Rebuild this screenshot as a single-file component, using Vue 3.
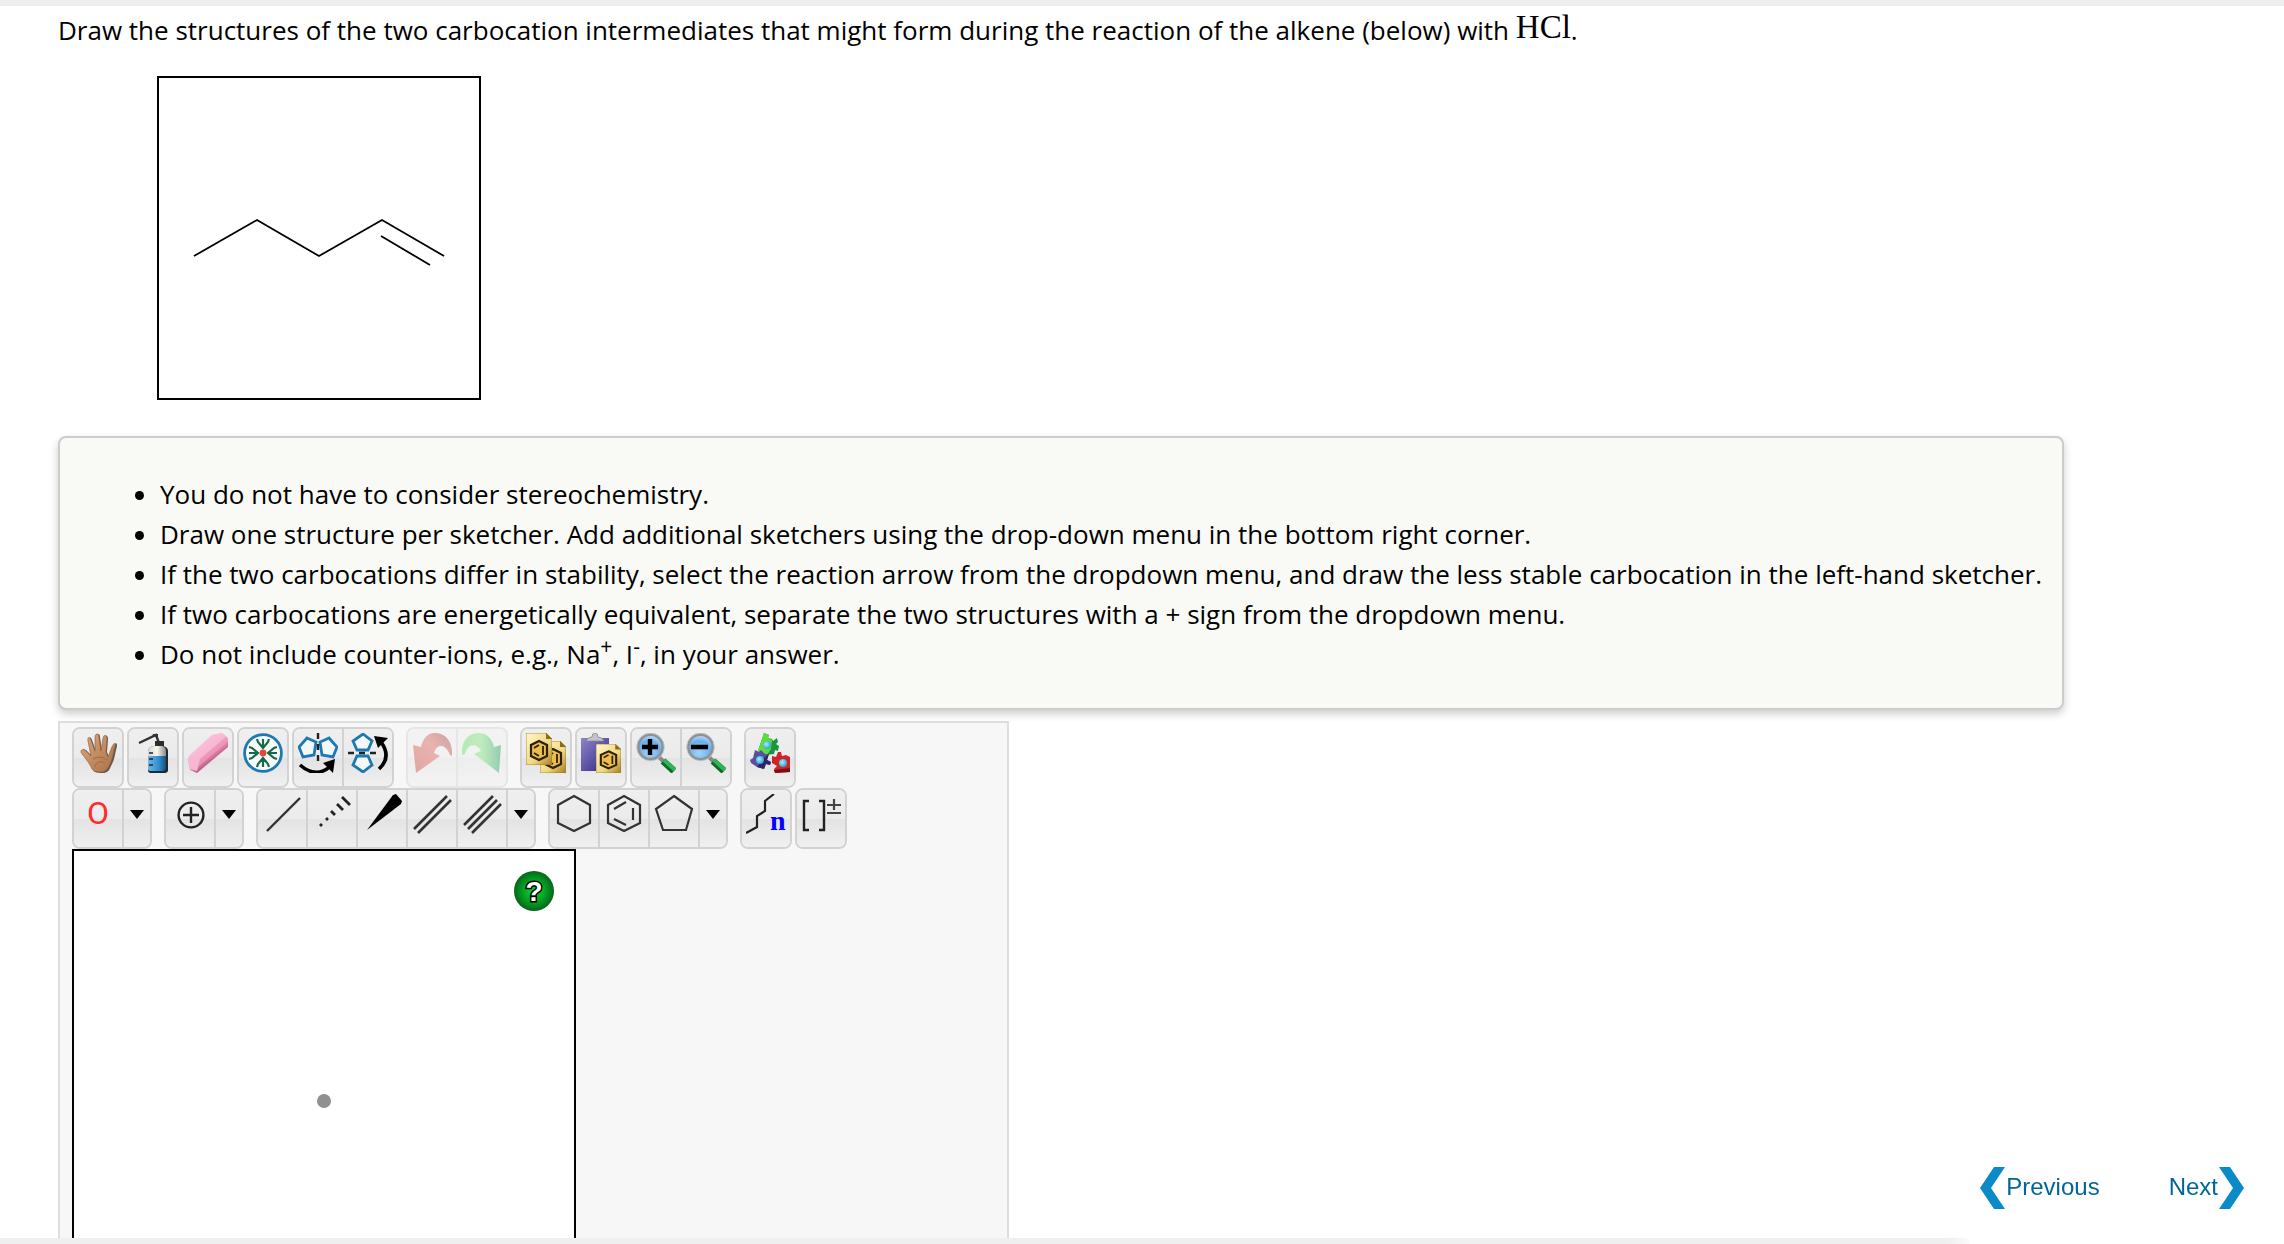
<script setup>
import { ref } from 'vue';

// toolbar definition: each group is one rounded block, 'menu' is the narrow drop-down cell
const topRow = [
  { tools: [{ icon: 'hand', label: 'Drag' }] },
  { tools: [{ icon: 'clear', label: 'Clear' }] },
  { tools: [{ icon: 'erase', label: 'Erase' }] },
  { tools: [{ icon: 'clean', label: 'Clean structure' }] },
  { tools: [{ icon: 'flip-h', label: 'Flip horizontal' }, { icon: 'flip-v', label: 'Flip vertical' }] },
  { spaced: true, disabled: true, tools: [{ icon: 'undo', label: 'Undo' }, { icon: 'redo', label: 'Redo' }] },
  { spaced: true, tools: [{ icon: 'copy', label: 'Copy' }] },
  { tools: [{ icon: 'paste', label: 'Paste' }] },
  { tools: [{ icon: 'zoom-in', label: 'Zoom in' }, { icon: 'zoom-out', label: 'Zoom out' }] },
  { spaced: true, tools: [{ icon: 'addons', label: 'Add-ons' }] },
];

const bottomRow = [
  { tools: [{ text: 'O', label: 'Oxygen' }, { menu: true, label: 'More elements' }] },
  { spaced: true, tools: [{ icon: 'charge', label: 'Charge' }, { menu: true, label: 'More charges' }] },
  {
    spaced: true,
    tools: [
      { icon: 'single', label: 'Single bond' },
      { icon: 'hashed', label: 'Hashed bond' },
      { icon: 'wedge', label: 'Wedge bond' },
      { icon: 'double', label: 'Double bond' },
      { icon: 'triple', label: 'Triple bond' },
      { menu: true, label: 'More bonds' },
    ],
  },
  {
    spaced: true,
    tools: [
      { icon: 'hexagon', label: 'Cyclohexane' },
      { icon: 'benzene', label: 'Benzene' },
      { icon: 'pentagon', label: 'Cyclopentane' },
      { menu: true, label: 'More rings' },
    ],
  },
  { spaced: true, tools: [{ icon: 'chain', label: 'Chain', count: 'n' }] },
  { tools: [{ icon: 'bracket', label: 'Bracket' }] },
];

const rows = [topRow, bottomRow];
const activeTool = ref('');
</script>

<template>
  <div class="frame">
    <!-- shared icon shapes -->
    <svg class="sprites" width="0" height="0" aria-hidden="true">
      <defs>
        <linearGradient id="skin" x1="0" y1="0" x2="1" y2="1">
          <stop offset="0" stop-color="#dda97c" /><stop offset="1" stop-color="#a86f45" />
        </linearGradient>
        <linearGradient id="water">
          <stop offset="0" stop-color="#6fb7e8" /><stop offset="0.6" stop-color="#2f8fd0" /><stop offset="1" stop-color="#174e78" />
        </linearGradient>
        <linearGradient id="glass">
          <stop offset="0" stop-color="#d8d8d4" /><stop offset="0.5" stop-color="#faf6ee" /><stop offset="1" stop-color="#8a8a8a" />
        </linearGradient>
        <linearGradient id="pink" x1="0.3" y1="0.2" x2="0.75" y2="0.8">
          <stop offset="0" stop-color="#fbc3da" /><stop offset="0.5" stop-color="#f29cc0" /><stop offset="0.75" stop-color="#c0638c" /><stop offset="1" stop-color="#4a1c2e" />
        </linearGradient>
        <linearGradient id="red-arrow" x1="0" y1="1" x2="1" y2="0">
          <stop offset="0" stop-color="#c9443c" /><stop offset="0.6" stop-color="#d9625a" /><stop offset="1" stop-color="#8c3a36" />
        </linearGradient>
        <linearGradient id="green-arrow">
          <stop offset="0" stop-color="#6ad86a" /><stop offset="0.5" stop-color="#7de07a" /><stop offset="1" stop-color="#1f9a58" />
        </linearGradient>
        <linearGradient id="paper" x1="0" y1="0" x2="1" y2="1">
          <stop offset="0" stop-color="#fff8cf" /><stop offset="0.6" stop-color="#f0d780" /><stop offset="1" stop-color="#a87c1c" />
        </linearGradient>
        <linearGradient id="board" x1="0" y1="0" x2="1" y2="1">
          <stop offset="0" stop-color="#8d84cc" /><stop offset="0.5" stop-color="#5f56a8" /><stop offset="1" stop-color="#2f2870" />
        </linearGradient>
        <radialGradient id="lens" cx="0.45" cy="0.75" r="0.8">
          <stop offset="0" stop-color="#9fd4fb" /><stop offset="0.6" stop-color="#6aaee8" /><stop offset="1" stop-color="#d4eafa" />
        </radialGradient>
        <radialGradient id="bead" cx="0.4" cy="0.4" r="0.6">
          <stop offset="0" stop-color="#a8ecff" /><stop offset="1" stop-color="#2ba6d8" />
        </radialGradient>
        <radialGradient id="help-fill">
          <stop offset="0" stop-color="#00d62c" /><stop offset="0.5" stop-color="#04aa24" /><stop offset="1" stop-color="#05661a" />
        </radialGradient>
      </defs>

      <symbol id="hand" viewBox="0 0 40 40">
        <path d="M14 37C12 31 8 26 4 21C1 17 5 15 8 18L13 23L10 8C9 4 12 3 13 7L17 18L17 4C17 0 21 0 21 4L23 18L25 5C26 1 29 2 29 6L28 19L30 24C32 19 33 15 35 12C38 8 39 12 37 17C36 22 35 28 32 33C30 38 28 40 24 40C20 40 16 40 14 37Z" fill="#3c281c" transform="translate(1 0)" opacity="0.75" />
        <path d="M14 36C12 31 8 26 4 21C1 17 5 15 8 18L13 23L10 8C9 4 12 3 13 7L17 18L17 4C17 0 21 0 21 4L23 18L25 5C26 1 29 2 29 6L28 19L30 24C32 19 33 15 35 12C38 8 38 12 36 17C35 22 34 28 31 33C29 37 27 39 23 39C19 39 16 39 14 36Z" fill="url(#skin)" stroke="#8a5a3a" stroke-width="0.6" />
        <path d="M15 26C20 23 25 24 29 27M17 34C18 29 22 27 27 30" fill="none" stroke="#a06a44" stroke-width="1" />
      </symbol>
      <symbol id="clear" viewBox="0 0 40 40">
        <path d="M6 10L23 2L26 10" fill="none" stroke="#333" stroke-width="2.4" />
        <path d="M20 1H25V4H19Z" fill="#333" />
        <rect x="22" y="8" width="9" height="5" fill="#2c2c2c" />
        <path d="M15 18Q16 13 22 13H30Q35 14 35 18V38Q34 40 32 40H17Q15 39 15 38Z" fill="#1c2a33" />
        <path d="M15 18Q16 13 22 13H29Q33 14 33 18V24H15Z" fill="url(#glass)" />
        <path d="M15 23H33V36Q32 38 30 38H17Q15 38 15 36Z" fill="url(#water)" />
        <path d="M16 20H20M16 26H20M16 32H20" stroke="#222" stroke-width="1.6" />
      </symbol>
      <symbol id="erase" viewBox="0 0 40 40">
        <path d="M1 23L24 2L34 0L40 5V14L9 40L2 37L0 28Z" fill="url(#pink)" />
        <path d="M1 23L24 2L34 0L38 4L12 26L3 25Z" fill="#fabfd8" opacity="0.7" />
        <path d="M12 26L38 4V10L10 34Z" fill="#f094bc" opacity="0.75" />
        <path d="M1 24L12 26L9 38L2 36L0 28Z" fill="#f7b6d2" />
      </symbol>
      <symbol id="clean" viewBox="0 0 40 40">
        <circle cx="20" cy="20" r="18.4" fill="#fbfdfc" stroke="#1d79b4" stroke-width="2.8" />
        <g fill="none" stroke="#146b4a" stroke-width="2.2">
          <path d="M20 6V15M14 6L15 9L20 15L25 9L26 6" />
          <path d="M20 34V25M14 34L15 31L20 25L25 31L26 34" />
          <path d="M6 20H15M6 14L9 15L15 20L9 25L6 26" />
          <path d="M34 20H25M34 14L31 15L25 20L31 25L34 26" />
        </g>
        <circle cx="20" cy="20" r="3.4" fill="#e2483c" />
      </symbol>
      <symbol id="flip-h" viewBox="0 0 40 40">
        <path d="M9 5L18 9L16 22L5 24L1 14ZM31 5L22 9L24 22L35 24L39 14Z" fill="#f3f8fb" stroke="#1d79b4" stroke-width="2.8" />
        <path d="M20 0V6M20 11V17M20 22V28" stroke="#222" stroke-width="2.4" />
        <path d="M2 32Q18 46 33 33" fill="none" stroke="#000" stroke-width="3.6" />
        <path d="M25 30L37 26L35 40Z" />
      </symbol>
      <symbol id="flip-v" viewBox="0 0 40 40">
        <path d="M15 1L24 8L20 17H9L5 8ZM15 39L24 32L20 23H9L5 32Z" fill="#f3f8fb" stroke="#1d79b4" stroke-width="2.8" />
        <path d="M0 20H6M11 20H17M22 20H28" stroke="#222" stroke-width="2.4" />
        <path d="M31 36Q44 24 33 9" fill="none" stroke="#000" stroke-width="3.6" />
        <path d="M26 3L40 5L30 15Z" />
      </symbol>
      <symbol id="undo" viewBox="0 0 40 40">
        <path d="M1 12L4 40L28 23L22 20C25 11 33 10 38 22L40 23C41 8 33 0 23 0C15 0 11 6 9 14Z" fill="url(#red-arrow)" />
      </symbol>
      <symbol id="redo" viewBox="0 0 40 40">
        <path d="M39 12L37 40L12 21L19 18C15 10 6 10 3 21L0 22C-1 8 6 0 17 0C25 0 30 6 32 14Z" fill="url(#green-arrow)" />
      </symbol>
      <symbol id="page" viewBox="0 0 26 32" preserveAspectRatio="none">
        <path d="M0 0H20L26 6V32H0Z" fill="url(#paper)" stroke="#9a7a28" stroke-width="0.8" />
        <path d="M20 0L26 6H20Z" fill="#8a6a20" />
        <path d="M13 8L21 12V23L13 27L5 23V12Z" fill="#eebb4e" stroke="#2a2108" stroke-width="2.2" />
        <path d="M8 15L13 12M8 20L13 23M17 13V22" fill="none" stroke="#2a2108" stroke-width="1.8" />
      </symbol>
      <symbol id="copy" viewBox="0 0 40 40">
        <use href="#page" x="14" y="8" width="26" height="32" />
        <use href="#page" x="0" y="0" width="26" height="32" />
      </symbol>
      <symbol id="paste" viewBox="0 0 40 40">
        <path d="M0 5H28V38H0Z" fill="url(#board)" />
        <path d="M5 8Q7 4 11 4Q11 0 14 0Q17 0 17 4Q21 4 23 8Z" fill="#c4c4c8" stroke="#888" stroke-width="0.8" />
        <use href="#page" x="15" y="11" width="25" height="29" />
      </symbol>
      <symbol id="lens-base" viewBox="0 0 40 40">
        <path d="M22 23L28 29" stroke="#8a8a8a" stroke-width="4" />
        <path d="M27 28L38 38" stroke="#0e6b28" stroke-width="7" />
        <path d="M28 27L39 37" stroke="#2fb552" stroke-width="4" />
        <circle cx="14.5" cy="14" r="12.4" fill="url(#lens)" stroke="#8b9298" stroke-width="3" />
        <circle cx="14.5" cy="14" r="13.8" fill="none" stroke="#c9cdd0" stroke-width="0.8" />
      </symbol>
      <symbol id="zoom-in" viewBox="0 0 40 40">
        <use href="#lens-base" width="40" height="40" />
        <path d="M6 14H22M14 6V22" stroke="#000" stroke-width="4.4" />
      </symbol>
      <symbol id="zoom-out" viewBox="0 0 40 40">
        <use href="#lens-base" width="40" height="40" />
        <path d="M5 14H22" stroke="#000" stroke-width="4.6" />
      </symbol>
      <symbol id="addons" viewBox="0 0 40 40">
        <path d="M14 0L19 2L18 5L22 6L23 8L27 5L28 9L26 11L29 13L28 18L25 17L24 21L16 22L8 18Z" fill="#1b9440" />
        <path d="M14 0L19 2L18 5L22 7L21 16L17 22L8 18Z" fill="#5fdc3a" />
        <path d="M5 17L9 19L11 17L15 21L19 21L17 27L21 29L20 32L16 31L14 36L7 34L1 30L0 27L3 25Z" fill="#5a4f9e" />
        <path d="M14 25L19 21L17 27L21 29L20 32L16 31L14 36L7 34Z" fill="#2d2764" />
        <path d="M22 23L26 24L28 19L31 19L32 23L36 22L40 24V39L25 40L24 36L27 33L22 30Z" fill="#cf2428" />
        <path d="M25 40L24 37L40 35V39Z" fill="#7c0f12" />
        <circle cx="17" cy="12" r="4" fill="url(#bead)" />
        <circle cx="10" cy="27" r="4" fill="url(#bead)" />
        <circle cx="33" cy="30" r="4" fill="url(#bead)" />
      </symbol>

      <symbol id="charge" viewBox="0 0 40 40">
        <circle cx="21" cy="21" r="12.4" fill="none" stroke="#222" stroke-width="2.4" />
        <path d="M13 21H29M21 13V29" stroke="#222" stroke-width="2.4" />
      </symbol>
      <symbol id="single" viewBox="0 0 40 40"><path d="M5 37L38 4" stroke="#333" stroke-width="2.4" /></symbol>
      <symbol id="hashed" viewBox="0 0 40 40">
        <path d="M8 30L10 32M14 24L16 26M19 17L23 21M25 10L31 16M30 3L38 11" stroke="#222" stroke-width="2.8" />
      </symbol>
      <symbol id="wedge" viewBox="0 0 40 40"><path d="M5 36L31 1L34 0L40 7L39 10Z" fill="#000" /></symbol>
      <symbol id="double" viewBox="0 0 40 40"><path d="M2 35L35 2M6 39L39 6" stroke="#333" stroke-width="2.6" /></symbol>
      <symbol id="triple" viewBox="0 0 40 40"><path d="M2 31L31 2M6 35L35 6M10 39L39 10" stroke="#333" stroke-width="2.6" /></symbol>
      <symbol id="hexagon" viewBox="0 0 40 40">
        <path d="M20 2L36 11V29L20 37L4 29V11Z" fill="none" stroke="#333" stroke-width="2.2" />
      </symbol>
      <symbol id="benzene" viewBox="0 0 40 40">
        <path d="M20 2L36 11V29L20 37L4 29V11ZM10 15L22 8M29 14V26M10 25L22 31" fill="none" stroke="#333" stroke-width="2.2" />
      </symbol>
      <symbol id="pentagon" viewBox="0 0 40 40">
        <path d="M20 2L38 15L32 36H9L2 15Z" fill="none" stroke="#333" stroke-width="2.2" />
      </symbol>
      <symbol id="chain" viewBox="0 0 40 40">
        <path d="M0 39L11 33V22L19 17V7L28 0" fill="none" stroke="#222" stroke-width="2.2" />
      </symbol>
      <symbol id="bracket" viewBox="0 0 40 40">
        <path d="M8 7H3V36H8M18 7H23V36H18" fill="none" stroke="#222" stroke-width="2.4" />
        <path d="M26 11H40M33 5V16M26 19H40" stroke="#444" stroke-width="2.2" />
      </symbol>
    </svg>

    <main class="content">
      <p class="question">
        Draw the structures of the two carbocation intermediates that might form during the reaction of the alkene (below) with <span class="formula">HCl</span>.
      </p>

      <svg class="molecule" viewBox="0 0 320 320" role="img" aria-label="1-pentene">
        <path d="M35 178L98 142L160 178L223 142L285 178M222 158L271 187" fill="none" stroke="#000" stroke-width="1.8" />
      </svg>

      <section class="hints">
        <ul>
          <li>You do not have to consider stereochemistry.</li>
          <li>Draw one structure per sketcher. Add additional sketchers using the drop-down menu in the bottom right corner.</li>
          <li>If the two carbocations differ in stability, select the reaction arrow from the dropdown menu, and draw the less stable carbocation in the left-hand sketcher.</li>
          <li>If two carbocations are energetically equivalent, separate the two structures with a + sign from the dropdown menu.</li>
          <li>Do not include counter-ions, e.g., Na<sup>+</sup>, I<sup>-</sup>, in your answer.</li>
        </ul>
      </section>

      <section class="sketcher">
        <div v-for="(row, r) in rows" :key="r" class="toolbar">
          <div v-for="(group, g) in row" :key="g" class="group" :class="{ spaced: group.spaced, disabled: group.disabled }">
            <button
              v-for="tool in group.tools"
              :key="tool.label"
              type="button"
              class="tool"
              :class="{ menu: tool.menu }"
              :aria-label="tool.label"
              :disabled="group.disabled"
              @click="activeTool = tool.label"
            >
              <svg v-if="tool.menu" class="caret" viewBox="0 0 14 9"><path d="M0 0H14L7 9Z" /></svg>
              <span v-else-if="tool.text" class="element">{{ tool.text }}</span>
              <svg v-else class="icon" viewBox="0 0 40 40">
                <use :href="'#' + tool.icon" width="40" height="40" />
                <text v-if="tool.count" x="24" y="36" class="count">{{ tool.count }}</text>
              </svg>
            </button>
          </div>
        </div>
        <div class="canvas">
          <span class="start-dot"></span>
          <button type="button" class="help" aria-label="Help">
            <svg viewBox="0 0 40 40">
              <circle cx="20" cy="20" r="20" fill="url(#help-fill)" />
              <text x="20" y="30" text-anchor="middle" class="help-mark">?</text>
            </svg>
          </button>
        </div>
      </section>
    </main>

    <nav class="pager">
      <a href="#previous">
        <svg class="chevron" viewBox="0 0 25 42"><path d="M14 0H25L11 21L25 42H14L0 21Z" /></svg>
        <span>Previous</span>
      </a>
      <a href="#next">
        <span>Next</span>
        <svg class="chevron" viewBox="0 0 25 42"><path d="M11 0H0L14 21L0 42H11L25 21Z" /></svg>
      </a>
    </nav>
  </div>
</template>

<style>
body {
  background: #fff;
  overflow: hidden;
}
</style>

<style scoped>
.frame {
  display: flex;
  flex-direction: column;
  height: 100vh;
  box-sizing: border-box;
  border-top: 6px solid #efefef;
  border-bottom: 6px solid #efefef;
  font-family: 'Open Sans', 'Noto Sans', sans-serif;
  font-size: 26px;
  line-height: 40px;
  color: #000;
}

.sprites {
  position: absolute;
}

.content {
  flex: 1;
  min-height: 0;
  overflow: hidden;
  padding: 4px 58px 0;
}

.question {
  margin: 0;
}

.formula {
  font-family: 'Liberation Serif', serif;
  font-size: 33px;
  line-height: 1px;
  vertical-align: 2px;
}

.molecule {
  display: block;
  width: 320px;
  height: 320px;
  margin: 26px 0 36px 99px;
  border: 2px solid #000;
}

.hints {
  width: fit-content;
  box-sizing: border-box;
  padding: 36px 20px 34px;
  background: #f9faf5;
  border: 2px solid #ccc;
  border-radius: 8px;
  box-shadow: 0 4px 8px rgba(0, 0, 0, 0.2);
}

.hints ul {
  margin: 0;
  padding-left: 80px;
}

.hints sup {
  font-size: 21px;
  line-height: 1px;
}

/* sketcher */
.sketcher {
  position: relative;
  max-width: 951px;
  box-sizing: border-box;
  margin-top: 11px;
  padding: 4px 12px 12px;
  background: #f7f7f7;
  border: 2px solid #ddd;
}

.toolbar {
  display: flex;
  gap: 3px;
}

.group {
  display: flex;
  height: 61px;
  box-sizing: border-box;
  border: 2px solid #d2d2d2;
  border-radius: 8px;
  overflow: hidden;
}

.group.spaced {
  margin-left: 9px;
}

.group.disabled {
  opacity: 0.45;
}

.tool {
  display: flex;
  justify-content: center;
  align-items: flex-start;
  box-sizing: content-box;
  width: 48px;
  padding: 4px 0 0;
  border: 0;
  background: linear-gradient(#efefef, #ebebeb 50%, #e3e3e3 51%, #f0f0f0);
  cursor: pointer;
}

.tool + .tool {
  border-left: 2px solid #d2d2d2;
}

.tool.menu {
  width: 26px;
}

.icon {
  width: 40px;
  height: 40px;
  overflow: visible;
}

.count {
  font-family: 'Liberation Serif', serif;
  font-size: 28px;
  font-weight: bold;
  fill: #00f;
}

.caret {
  width: 14px;
  height: 9px;
  margin-top: 16px;
}

.element {
  font-family: Roboto, sans-serif;
  font-size: 32px;
  line-height: 38px;
  color: #ff2a2a;
}

.canvas {
  position: relative;
  display: flex;
  align-items: center;
  justify-content: center;
  width: 500px;
  height: 500px;
  background: #fff;
  border: 2px solid #000;
}

.start-dot {
  width: 14px;
  height: 14px;
  border-radius: 50%;
  background: #909090;
}

.help {
  position: absolute;
  top: 20px;
  right: 20px;
  width: 40px;
  height: 40px;
  padding: 0;
  border: 0;
  background: none;
  cursor: pointer;
}

.help svg {
  display: block;
}

.help-mark {
  font-family: 'Liberation Sans', sans-serif;
  font-size: 28px;
  font-weight: bold;
  fill: #fff;
  stroke: #000;
  stroke-width: 3px;
  paint-order: stroke;
}

/* floating previous / next links */
.pager {
  position: fixed;
  right: 0;
  bottom: 0;
  display: flex;
  gap: 69px;
  padding: 17px 40px 35px 10px;
  background: #fff;
  box-shadow: 0 0 20px 10px #fff;
}

.pager a {
  display: flex;
  align-items: center;
  gap: 1px;
  font-family: 'Liberation Sans', Arial, sans-serif;
  font-size: 24px;
  line-height: 40px;
  color: #006699;
  text-decoration: none;
}

.pager span {
  padding-bottom: 2px;
}

.chevron {
  width: 25px;
  height: 42px;
  fill: #0a8ac6;
}
</style>
